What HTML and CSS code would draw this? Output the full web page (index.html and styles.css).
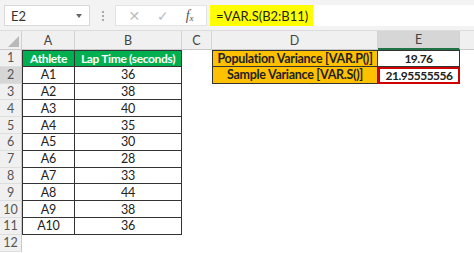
FILE: index.html
```html
<!DOCTYPE html>
<html>
<head>
<meta charset="utf-8">
<link rel="stylesheet" href="styles.css">
</head>
<body>
<div class="app">
  <div class="fbar">
    <div class="namebox"><span class="name">E2</span><span class="caret"></span></div>
    <div class="dots"><i></i><i></i><i></i></div>
    <div class="btns">
      <span class="btn x">✕</span>
      <span class="btn ok">✓</span>
      <span class="btn fx">f<sub>x</sub></span>
    </div>
    <div class="formula"><span class="hl">=VAR.S(B2:B11)</span></div>
  </div>
  <div class="sheet">
    <div class="corner"><span class="tri"></span></div>
    <div class="ch">A</div>
    <div class="ch">B</div>
    <div class="ch">C</div>
    <div class="ch">D</div>
    <div class="ch sel">E</div>
    <div class="ch last"></div>

    <div class="rh">1</div>
    <div class="c g bl bt">Athlete</div>
    <div class="c g bt">Lap Time (seconds)</div>
    <div class="c"></div>
    <div class="c o bl bt">Population Variance [VAR.P()]</div>
    <div class="c w bt">19.76</div>
    <div class="c"></div>

    <div class="rh sel">2</div>
    <div class="c t bl">A1</div>
    <div class="c t">36</div>
    <div class="c"></div>
    <div class="c o bl">Sample Variance [VAR.S()]</div>
    <div class="c w active">21.95555556</div>
    <div class="c"></div>

    <div class="rh">3</div><div class="c t bl">A2</div><div class="c t">38</div><div class="c"></div><div class="c"></div><div class="c"></div><div class="c"></div>
    <div class="rh">4</div><div class="c t bl">A3</div><div class="c t">40</div><div class="c"></div><div class="c"></div><div class="c"></div><div class="c"></div>
    <div class="rh">5</div><div class="c t bl">A4</div><div class="c t">35</div><div class="c"></div><div class="c"></div><div class="c"></div><div class="c"></div>
    <div class="rh">6</div><div class="c t bl">A5</div><div class="c t">30</div><div class="c"></div><div class="c"></div><div class="c"></div><div class="c"></div>
    <div class="rh">7</div><div class="c t bl">A6</div><div class="c t">28</div><div class="c"></div><div class="c"></div><div class="c"></div><div class="c"></div>
    <div class="rh">8</div><div class="c t bl">A7</div><div class="c t">33</div><div class="c"></div><div class="c"></div><div class="c"></div><div class="c"></div>
    <div class="rh">9</div><div class="c t bl">A8</div><div class="c t">44</div><div class="c"></div><div class="c"></div><div class="c"></div><div class="c"></div>
    <div class="rh">10</div><div class="c t bl">A9</div><div class="c t">38</div><div class="c"></div><div class="c"></div><div class="c"></div><div class="c"></div>
    <div class="rh">11</div><div class="c t bl">A10</div><div class="c t">36</div><div class="c"></div><div class="c"></div><div class="c"></div><div class="c"></div>
    <div class="rh">12</div><div class="c"></div><div class="c"></div><div class="c"></div><div class="c"></div><div class="c"></div><div class="c"></div>
  </div>
</div>
</body>
</html>
```
FILE: styles.css
```css
* { box-sizing: border-box; }
html, body { margin: 0; padding: 0; background: #fff; }
body { width: 474px; height: 253px; overflow: hidden; font-family: Lato, "Open Sans", sans-serif; }
.app { display: flex; flex-direction: column; }

.fbar {
  height: 31px;
  background: #f3f3f3;
  display: flex;
  align-items: center;
  padding: 4px 0 3px 4px;
  border-bottom: 1px solid #dcdcdc;
}
.namebox {
  width: 86px; height: 21px;
  background: #fff;
  border: 1px solid #d9d9d9;
  display: flex; align-items: center; justify-content: space-between;
  padding: 0 7px 0 6px;
  font-size: 13px; color: #333;
}
.caret { width: 0; height: 0; border-left: 3.5px solid transparent; border-right: 3.5px solid transparent; border-top: 4px solid #666; }
.dots { width: 25px; display: flex; flex-direction: column; align-items: center; gap: 2px; }
.dots i { width: 2px; height: 2px; background: #aaa; display: block; }
.btns {
  width: 92px; height: 21px; background: #fff; border: 1px solid #e3e3e3;
  display: flex; align-items: center; justify-content: space-around;
  padding: 0 4px;
  font-size: 14px;
}
.btn { color: #bdbdbd; font-family: "DejaVu Sans", sans-serif; }
.btn.fx { color: #555; font-family: "Liberation Serif", serif; font-style: italic; font-size: 14px; }
.btn.fx sub { font-size: 9px; vertical-align: -1px; }
.formula {
  flex: 1; height: 21px; background: #fff; margin-left: 3px;
  display: flex; align-items: stretch;
}
.hl { background: #ffff00; color: #222; font-size: 13px; padding: 0 5px 0 6px; display: flex; align-items: center; }

.sheet {
  display: grid;
  grid-template-columns: 22px 53px 107px 30px 166px 82px 1fr;
  grid-template-rows: 19px repeat(12, 16.8px);
}
.corner { background: #f0f0f0; border-right: 1px solid #d0d0d0; border-bottom: 1px solid #c9c9c9; position: relative; }
.tri { position: absolute; right: 2px; bottom: 2px; width: 0; height: 0; border-left: 11px solid transparent; border-bottom: 11px solid #b9b9b9; }
.ch {
  background: #f0f0f0; color: #444; font-size: 12.5px;
  display: flex; align-items: center; justify-content: center;
  border-right: 1px solid #d4d4d4; border-bottom: 1px solid #c9c9c9;
}
.ch.sel { background: #d6d6d6; border-bottom: 2px solid #217346; }
.ch.last { border-right: none; }
.rh {
  background: #f0f0f0; color: #555; font-size: 12.5px;
  display: flex; align-items: center; justify-content: center;
  border-right: 1px solid #c9c9c9; border-bottom: 1px solid #dedede;
}
.rh.sel { background: #d6d6d6; }
.c { display: flex; align-items: center; justify-content: center; color: #222; white-space: nowrap; font-size: 12.5px; letter-spacing: -0.2px; }
.bl { border-left: 1px solid #333; }
.bt { border-top: 1px solid #333; }
.g { background: #00b050; color: #fff; font-weight: bold; font-size: 12px; letter-spacing: -0.35px; border-right: 1px solid #333; border-bottom: 1px solid #333; }
.t { border-right: 1px solid #333; border-bottom: 1px solid #333; }
.o { background: #ffc000; color: #222; font-weight: bold; font-size: 12.5px; letter-spacing: -0.3px; border-right: 1px solid #333; border-bottom: 1px solid #333; }
.w { background: #fff; font-weight: bold; font-size: 12px; letter-spacing: -0.5px; border-right: 1px solid #333; border-bottom: 1px solid #333; }
.active { border: 2px solid #d00000; }
```
